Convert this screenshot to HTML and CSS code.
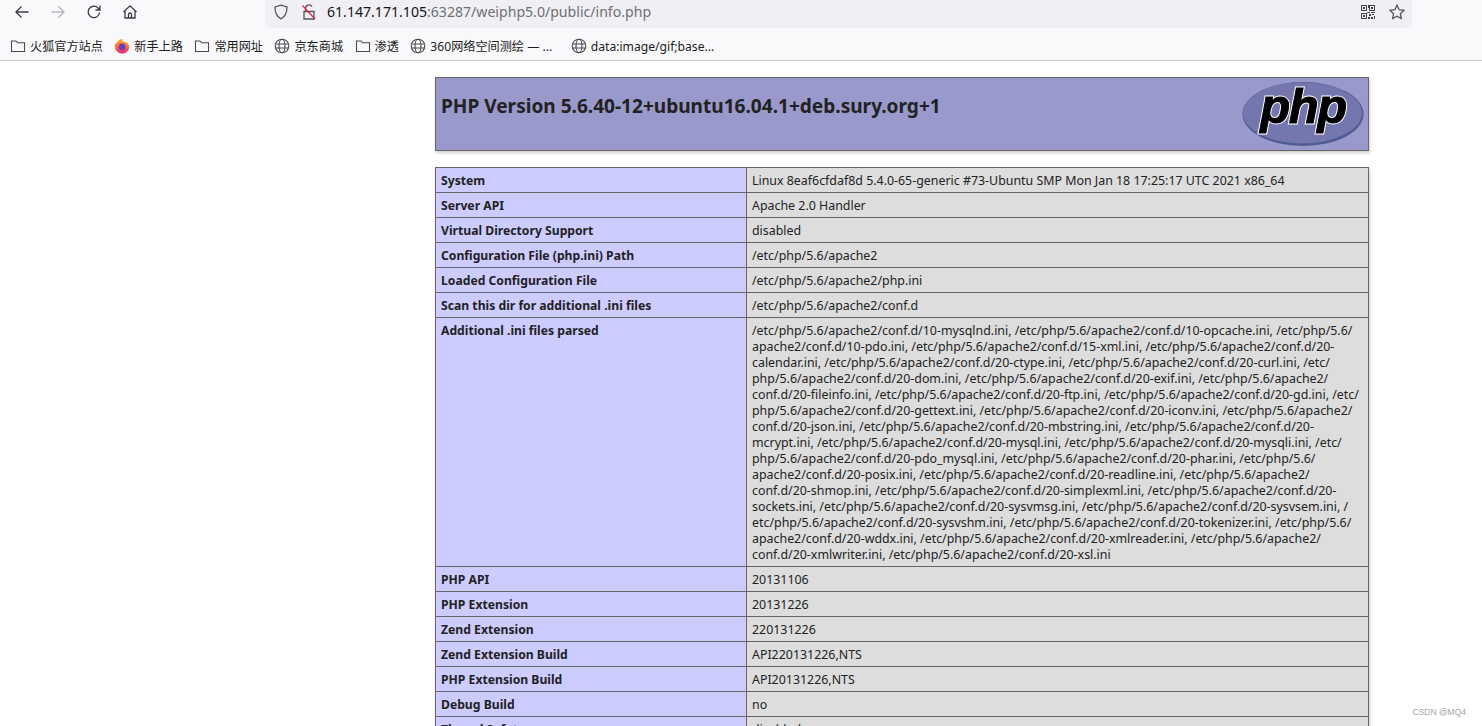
FILE: index.html
```html
<!DOCTYPE html>
<html lang="en">
<head>
<meta charset="utf-8">
<title>phpinfo()</title>
<link rel="stylesheet" href="styles.css">
</head>
<body>
<header class="chrome">
  <div class="toolbar">
    <nav class="nav">
      <svg class="ico" viewBox="0 0 16 16"><path d="M14.5 8H2M7.5 2.5 2 8l5.500 5.500"/></svg>
      <svg class="ico dim" viewBox="0 0 16 16"><path d="M1.500 8H14M8.500 2.500 14 8l-5.500 5.500"/></svg>
      <svg class="ico" viewBox="0 0 16 16"><path d="M13.500 8.500A5.700 5.700 0 1 1 11.800 3.800L14 6M14 1.500V6H9.500"/></svg>
      <svg class="ico" viewBox="0 0 16 16"><path d="M1.500 8 8 1.800 14.500 8M3 6.800V14h10V6.800M6.500 14V10.500a1.500 1.500 0 0 1 3 0V14"/></svg>
    </nav>
    <div class="urlbar">
      <svg class="ico shield" viewBox="0 0 16 16"><path d="M8 1.200 14 3c0 6-1.500 9.500-6 11.800C3.500 12.500 2 9 2 3z"/></svg>
      <svg class="ico lock" viewBox="0 0 16 16"><path d="M4.500 7V4.500a3.500 3.500 0 0 1 6.500 -1.800M3 7.500h10V15H3z"/><path class="slash" d="M1.500 1.500 14 15"/></svg>
      <span class="url"><span class="host">61.147.171.105</span>:63287/weiphp5.0/public/info.php</span>
      <span class="spacer"></span>
      <svg class="qr" viewBox="0 0 14 14"><path d="M0 0h6v6H0zM1 1v4h4V1zM2 2h2v2H2zM8 0h6v6H8zM9 1v4h4V1zM10 2h2v2h-2zM0 8h6v6H0zM1 9v4h4V9zM2 10h2v2H2zM7 0h1v3H7zM6 7h3v1H6zM10 7h4v1h-4zM8 9h2v2H8zM11 9h2v1h-2zM7 12h2v2H7zM10 12h2v2h-2zM13 11h1v3h-1z"/></svg>
      <svg class="ico star" viewBox="0 0 16 16"><path d="M8 1.200 10.100 5.700 15 6.300 11.400 9.700 12.300 14.600 8 12.200 3.700 14.600 4.600 9.700 1 6.300 5.900 5.700z"/></svg>
    </div>
  </div>
  <div class="bookmarks">
    <span class="bm"><svg class="bi" viewBox="0 0 16 16"><path d="M1.500 13.500V3h4.500l1.500 1.800h7v8.700z"/></svg>火狐官方站点</span>
    <span class="bm"><svg class="bi fx" viewBox="0 0 16 16"><defs><linearGradient id="fxg" x1="0" y1="0" x2="0" y2="1"><stop offset="0" stop-color="#ffb020"/><stop offset=".55" stop-color="#ff6a3a"/><stop offset="1" stop-color="#e3208a"/></linearGradient></defs><path d="M8 15.500A7.300 7.300 0 0 1 1 6.500L3 4.500C4 2 6.500 .8 9 1 8 2 8 3 9 3.500c3 .5 6.500 2.500 6.300 5.500A7.300 7.300 0 0 1 8 15.500z" fill="url(#fxg)"/><circle cx="8" cy="8.800" r="3.400" fill="#6a3fc4"/></svg>新手上路</span>
    <span class="bm"><svg class="bi" viewBox="0 0 16 16"><path d="M1.500 13.500V3h4.500l1.500 1.800h7v8.700z"/></svg>常用网址</span>
    <span class="bm"><svg class="bi" viewBox="0 0 16 16"><circle cx="8" cy="8" r="6.800"/><ellipse cx="8" cy="8" rx="3" ry="6.800"/><path d="M1.500 6h13M1.500 10h13"/></svg>京东商城</span>
    <span class="bm"><svg class="bi" viewBox="0 0 16 16"><path d="M1.500 13.500V3h4.500l1.500 1.800h7v8.700z"/></svg>渗透</span>
    <span class="bm wide"><svg class="bi" viewBox="0 0 16 16"><circle cx="8" cy="8" r="6.800"/><ellipse cx="8" cy="8" rx="3" ry="6.800"/><path d="M1.500 6h13M1.500 10h13"/></svg>360网络空间测绘 — ...</span>
    <span class="bm"><svg class="bi" viewBox="0 0 16 16"><circle cx="8" cy="8" r="6.800"/><ellipse cx="8" cy="8" rx="3" ry="6.800"/><path d="M1.500 6h13M1.500 10h13"/></svg>data:image/gif;base...</span>
  </div>
</header>
<main class="center">
  <div class="banner">
    <h1>PHP Version 5.6.40-12+ubuntu16.04.1+deb.sury.org+1</h1>
    <svg class="logo" viewBox="0 -3 122 72">
      <ellipse cx="61" cy="33" rx="60.500" ry="32" fill="#4f5b93"/>
      <ellipse cx="60.500" cy="32" rx="59.500" ry="30.500" fill="#7377ad"/>
      <text x="61" y="42" text-anchor="middle" class="logotext halo">php</text>
      <text x="61" y="42" text-anchor="middle" class="logotext">php</text>
    </svg>
  </div>
  <table class="info">
    <tr><td class="e">System</td><td class="v">Linux 8eaf6cfdaf8d 5.4.0-65-generic #73-Ubuntu SMP Mon Jan 18 17:25:17 UTC 2021 x86_64</td></tr>
    <tr><td class="e">Server API</td><td class="v">Apache 2.0 Handler</td></tr>
    <tr><td class="e">Virtual Directory Support</td><td class="v">disabled</td></tr>
    <tr><td class="e">Configuration File (php.ini) Path</td><td class="v">/etc/php/5.6/apache2</td></tr>
    <tr><td class="e">Loaded Configuration File</td><td class="v">/etc/php/5.6/apache2/php.ini</td></tr>
    <tr><td class="e">Scan this dir for additional .ini files</td><td class="v">/etc/php/5.6/apache2/conf.d</td></tr>
    <tr><td class="e">Additional .ini files parsed</td><td class="v">/etc/php/5.6/apache2/conf.d/10-mysqlnd.ini, /etc/php/5.6/apache2/conf.d/10-opcache.ini, /etc/php/5.6/<br>apache2/conf.d/10-pdo.ini, /etc/php/5.6/apache2/conf.d/15-xml.ini, /etc/php/5.6/apache2/conf.d/20-<br>calendar.ini, /etc/php/5.6/apache2/conf.d/20-ctype.ini, /etc/php/5.6/apache2/conf.d/20-curl.ini, /etc/<br>php/5.6/apache2/conf.d/20-dom.ini, /etc/php/5.6/apache2/conf.d/20-exif.ini, /etc/php/5.6/apache2/<br>conf.d/20-fileinfo.ini, /etc/php/5.6/apache2/conf.d/20-ftp.ini, /etc/php/5.6/apache2/conf.d/20-gd.ini, /etc/<br>php/5.6/apache2/conf.d/20-gettext.ini, /etc/php/5.6/apache2/conf.d/20-iconv.ini, /etc/php/5.6/apache2/<br>conf.d/20-json.ini, /etc/php/5.6/apache2/conf.d/20-mbstring.ini, /etc/php/5.6/apache2/conf.d/20-<br>mcrypt.ini, /etc/php/5.6/apache2/conf.d/20-mysql.ini, /etc/php/5.6/apache2/conf.d/20-mysqli.ini, /etc/<br>php/5.6/apache2/conf.d/20-pdo_mysql.ini, /etc/php/5.6/apache2/conf.d/20-phar.ini, /etc/php/5.6/<br>apache2/conf.d/20-posix.ini, /etc/php/5.6/apache2/conf.d/20-readline.ini, /etc/php/5.6/apache2/<br>conf.d/20-shmop.ini, /etc/php/5.6/apache2/conf.d/20-simplexml.ini, /etc/php/5.6/apache2/conf.d/20-<br>sockets.ini, /etc/php/5.6/apache2/conf.d/20-sysvmsg.ini, /etc/php/5.6/apache2/conf.d/20-sysvsem.ini, /<br>etc/php/5.6/apache2/conf.d/20-sysvshm.ini, /etc/php/5.6/apache2/conf.d/20-tokenizer.ini, /etc/php/5.6/<br>apache2/conf.d/20-wddx.ini, /etc/php/5.6/apache2/conf.d/20-xmlreader.ini, /etc/php/5.6/apache2/<br>conf.d/20-xmlwriter.ini, /etc/php/5.6/apache2/conf.d/20-xsl.ini</td></tr>
    <tr><td class="e">PHP API</td><td class="v">20131106</td></tr>
    <tr><td class="e">PHP Extension</td><td class="v">20131226</td></tr>
    <tr><td class="e">Zend Extension</td><td class="v">220131226</td></tr>
    <tr><td class="e">Zend Extension Build</td><td class="v">API220131226,NTS</td></tr>
    <tr><td class="e">PHP Extension Build</td><td class="v">API20131226,NTS</td></tr>
    <tr><td class="e">Debug Build</td><td class="v">no</td></tr>
    <tr><td class="e">Thread Safety</td><td class="v">disabled</td></tr>
  </table>
</main>
<div class="watermark">CSDN @MQ4</div>
</body>
</html>
```
FILE: styles.css
```css
* { box-sizing: border-box; }
html, body { height: 100%; overflow: hidden; }
body { margin: 0; background: #fff; color: #222; font-family: "Noto Sans", "Noto Sans CJK SC", sans-serif; position: relative; }

.chrome { height: 61px; background: #f9f9fb; border-bottom: 1px solid #ccc; }
.toolbar { height: 28px; display: flex; align-items: flex-start; }
.nav { width: 265px; height: 28px; padding: 4px 0 0 14px; display: flex; gap: 20px; flex: none; }
.ico { width: 16px; height: 16px; fill: none; stroke: #3a3a40; stroke-width: 1.300; flex: none; }
.ico.dim { stroke: #b4b4ba; }
.urlbar { width: 1147px; height: 28px; background: #f0f0f4; border-radius: 0 0 5px 5px; display: flex; align-items: center; padding: 0 7px 4px 8px; }
.shield { margin-right: 12px; stroke: #55555c; }
.lock { margin-right: 10px; stroke: #55555c; }
.slash { stroke: #e22850; }
.url { font-size: 14.100px; color: #6f6f76; white-space: nowrap; margin-bottom: 2px; }
.host { color: #15141a; }
.spacer { flex: 1; }
.qr { width: 14px; height: 14px; fill: #3f3f45; margin-right: 14px; }
.star { width: 16px; height: 16px; stroke: #55555c; }

.bookmarks { height: 32px; display: flex; align-items: center; padding: 4px 0 0 10px; font-size: 12.150px; color: #1c1b22; }
.bm { display: flex; align-items: center; gap: 4px; margin-right: 11.500px; white-space: nowrap; }
.bm.wide { margin-right: 18.500px; }
.bi { width: 16px; height: 16px; fill: none; stroke: #4a4a50; stroke-width: 1.100; flex: none; }
.bi.fx { stroke: none; }

.center { width: 934px; margin: 16px 0 0 435px; }
.banner { height: 74px; background: #99c; border: 1px solid #666; box-shadow: 1px 2px 3px #ccc; padding: 0 5px; display: flex; justify-content: space-between; margin-bottom: 16px; }
.banner h1 { margin: 15px 0 0; font-size: 19.070px; line-height: 26px; font-weight: 700; color: #222; white-space: nowrap; }
.logo { width: 122px; height: 72px; flex: none; position: relative; left: 1px; }
.logotext { font-family: "Liberation Sans", sans-serif; font-style: italic; font-weight: 700; font-size: 49px; letter-spacing: -1.500px; fill: #000; stroke: #000; stroke-width: 1px; }
.logotext.halo { stroke: #fff; stroke-width: 3px; }

.info { width: 934px; border-collapse: collapse; table-layout: fixed; box-shadow: 1px 2px 3px #ccc; font-size: 12.400px; line-height: 16px; }
.info td { border: 1px solid #666; padding: 5px 5px 3px; vertical-align: baseline; white-space: nowrap; overflow: hidden; }
.info td.e { width: 311px; background: #ccf; font-weight: 700; font-size: 12.180px; }
.info td.v { background: #ddd; }

.watermark { position: absolute; right: 16px; top: 707px; font-size: 8.500px; color: #a4a4a4; font-family: "Liberation Sans", sans-serif; }
```
